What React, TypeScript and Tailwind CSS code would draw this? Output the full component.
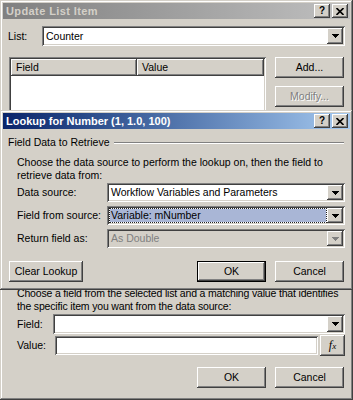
import React from "react";

const raised =
  "bg-[#d4d0c8] shadow-[inset_-1px_-1px_0_#404040,inset_1px_1px_0_#fff,inset_-2px_-2px_0_#808080,inset_2px_2px_0_#d4d0c8]";
const sunken =
  "shadow-[inset_1px_1px_0_#808080,inset_-1px_-1px_0_#fff,inset_2px_2px_0_#404040,inset_-2px_-2px_0_#d4d0c8]";
const frame =
  "bg-[#d4d0c8] shadow-[inset_-1px_-1px_0_#404040,inset_1px_1px_0_#d4d0c8,inset_-2px_-2px_0_#808080,inset_2px_2px_0_#fff]";

const Arrow = ({ disabled }: { disabled?: boolean }) => (
  <svg width="7" height="4" viewBox="0 0 7 4" shapeRendering="crispEdges">
    <polygon points="0,0 7,0 3.5,4" fill={disabled ? "#808080" : "#000"} />
  </svg>
);

type ComboProps = {
  value?: string;
  className?: string;
  selected?: boolean;
  disabled?: boolean;
};

const Combo: React.FC<ComboProps> = ({ value, className = "", selected, disabled }) => (
  <div
    className={`${sunken} ${disabled ? "bg-[#d4d0c8]" : "bg-white"} h-[19px] flex items-stretch p-[2px] ${className}`}
  >
    <div className="flex-1 flex items-center px-[1px] min-w-0">
      {selected ? (
        <div className="w-full h-[13px] flex items-center bg-[#a9b6d6] outline outline-1 outline-dotted outline-[#222] pl-[1px]">
          {value}
        </div>
      ) : (
        <span className={`pl-[1px] ${disabled ? "text-[#808080]" : ""}`}>{value}</span>
      )}
    </div>
    <div className={`${raised} w-[16px] flex items-center justify-center`}>
      <Arrow disabled={disabled} />
    </div>
  </div>
);

type BtnProps = {
  children: React.ReactNode;
  className?: string;
  disabled?: boolean;
  isDefault?: boolean;
};

const Button: React.FC<BtnProps> = ({ children, className = "", disabled, isDefault }) => (
  <div
    className={`${raised} h-[21px] flex items-center justify-center ${isDefault ? "border border-black" : ""} ${
      disabled ? "text-[#808080] [text-shadow:1px_1px_0_#fff]" : ""
    } ${className}`}
  >
    {children}
  </div>
);

const TitleBar: React.FC<{ title: string; active?: boolean }> = ({ title, active }) => (
  <div
    className={`h-[16px] flex items-center justify-between pl-[3px] pr-[2px] bg-linear-to-r ${
      active ? "from-[#0a246a] to-[#a6caf0] text-white" : "from-[#808080] to-[#c0c0c0] text-[#d4d0c8]"
    }`}
  >
    <span className={`font-bold text-[11px] leading-none ${active ? "" : "tracking-[0.4px]"}`}>{title}</span>
    <div className="flex gap-[2px]">
      <div className={`${raised} w-[16px] h-[14px] flex items-center justify-center text-black font-bold text-[10px] leading-none`}>
        ?
      </div>
      <div className={`${raised} w-[16px] h-[14px] flex items-center justify-center`}>
        <svg width="8" height="7" viewBox="0 0 8 7">
          <path d="M0.5 0 L7.5 7 M7.5 0 L0.5 7" stroke="#000" strokeWidth="1.6" />
        </svg>
      </div>
    </div>
  </div>
);

export default function App() {
  return (
    <div
      className={`${frame} font-['Liberation_Sans',Arial,sans-serif] relative w-[353px] h-[400px] p-[3px] text-[10.5px] leading-[13px] text-black overflow-hidden`}
    >
      <TitleBar title="Update List Item" />

      <div className="px-[5px]">
        <div className="mt-[7px] flex items-center h-[20px]">
          <span className="w-[34px]">List:</span>
          <Combo className="flex-1 h-[20px]" value="Counter" />
        </div>

        <div className="mt-[11px] flex gap-[9px] h-[222px]">
          <div className={`${sunken} bg-white ml-[1px] w-[257px] p-[2px]`}>
            <div className="flex h-[17px] bg-[#d4d0c8]">
              <div className={`${raised} w-[126px] flex items-center pl-[5px]`}>Field</div>
              <div className={`${raised} flex-1 flex items-center pl-[5px]`}>Value</div>
            </div>
          </div>
          <div className="flex flex-col gap-[8px] mr-[1px]">
            <Button className="w-[69px]">Add...</Button>
            <Button className="w-[69px]" disabled>
              Modify...
            </Button>
          </div>
        </div>

        <p className="mt-[8px] ml-[9px] whitespace-nowrap tracking-[-0.17px]">
          Choose a field from the selected list and a matching value that identifies
          <br />
          the specific item you want from the data source:
        </p>

        <div className="mt-[1px] flex items-center h-[20px]">
          <span className="ml-[9px] w-[36px]">Field:</span>
          <Combo className="flex-1 h-[20px]" />
        </div>
        <div className="mt-[2px] flex items-center h-[19px] gap-[2px]">
          <span className="ml-[9px] w-[36px]">Value:</span>
          <div className={`${sunken} bg-white flex-1 h-full`} />
          <Button className="w-[25px] h-[19px]">
            <span className="font-['Liberation_Serif',serif] italic text-[12px]">
              f<span className="text-[9px]">x</span>
            </span>
          </Button>
        </div>

        <div className="mt-[12px] flex justify-end gap-[9px] pr-[1px]">
          <Button className="w-[69px]">OK</Button>
          <Button className="w-[69px]">Cancel</Button>
        </div>
      </div>

      {/* lookup dialog sits on top of the list item dialog */}
      <div className={`${frame} absolute left-0 top-[110px] w-[353px] h-[180px] p-[3px]`}>
        <TitleBar title="Lookup for Number (1, 1.0, 100)" active />
        <div className="px-[5px]">
          <div className="mt-[7px] flex items-center gap-[4px]">
            <span>Field Data to Retrieve</span>
            <div className="flex-1 border-t border-t-[#808080] border-b border-b-white mr-[1px]" />
          </div>

          <div className="ml-[9px]">
            <p className="mt-[7px] whitespace-nowrap">
              Choose the data source to perform the lookup on, then the field to
              <br />
              retrieve data from:
            </p>
            <div className="mt-[1px] flex flex-col gap-[4px]">
              <div className="flex items-center">
                <span className="w-[90px]">Data source:</span>
                <Combo className="flex-1" value="Workflow Variables and Parameters" />
              </div>
              <div className="flex items-center">
                <span className="w-[90px]">Field from source:</span>
                <Combo className="flex-1" value="Variable: mNumber" selected />
              </div>
              <div className="flex items-center">
                <span className="w-[90px]">Return field as:</span>
                <Combo className="flex-1" value="As Double" disabled />
              </div>
            </div>
          </div>

          <div className="mt-[13px] flex items-center pr-[1px]">
            <Button className="w-[74px] ml-[1px]">Clear Lookup</Button>
            <div className="flex-1" />
            <div className="flex gap-[9px]">
              <Button className="w-[69px]" isDefault>
                OK
              </Button>
              <Button className="w-[69px]">Cancel</Button>
            </div>
          </div>
        </div>
      </div>
    </div>
  );
}
